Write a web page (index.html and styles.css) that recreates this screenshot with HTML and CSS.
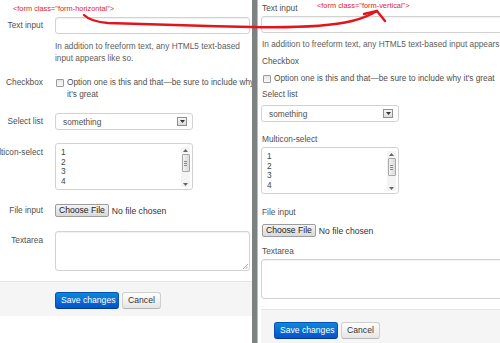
FILE: index.html
```html
<!DOCTYPE html>
<html>
<head>
<meta charset="utf-8">
<link rel="stylesheet" href="styles.css">
</head>
<body>
<div class="page">
  <section class="panel panel-h">
    <form class="form-h">
      <div class="row row-text">
        <label class="lbl">Text input</label>
        <div class="controls">
          <div class="input input-h"></div>
          <p class="help">In addition to freeform text, any HTML5 text-based<br>input appears like so.</p>
        </div>
      </div>
      <div class="row row-check">
        <label class="lbl">Checkbox</label>
        <div class="controls check">
          <span class="cb"></span>
          <span class="check-text">Option one is this and that—be sure to include why<br>it's great</span>
        </div>
      </div>
      <div class="row row-select">
        <label class="lbl">Select list</label>
        <div class="controls">
          <div class="select"><span>something</span><span class="dd"><svg width="5" height="3" viewBox="0 0 5 3"><path d="M0 0H5L2.5 3Z" fill="#333"/></svg></span></div>
        </div>
      </div>
      <div class="row row-multi">
        <label class="lbl lbl-top">Multicon-select</label>
        <div class="controls">
          <div class="multi">
            <div class="opts"><div>1</div><div>2</div><div>3</div><div>4</div></div>
            <div class="sb">
              <span class="sb-up"><svg width="5" height="3" viewBox="0 0 5 3"><path d="M0 3H5L2.5 0Z" fill="#666"/></svg></span>
              <span class="sb-thumb"><i></i><i></i><i></i></span>
              <span class="sb-down"><svg width="5" height="3" viewBox="0 0 5 3"><path d="M0 0H5L2.5 3Z" fill="#666"/></svg></span>
            </div>
          </div>
        </div>
      </div>
      <div class="row row-file">
        <label class="lbl">File input</label>
        <div class="controls file">
          <span class="choose">Choose File</span><span class="nofile">No file chosen</span>
        </div>
      </div>
      <div class="row row-ta">
        <label class="lbl lbl-top">Textarea</label>
        <div class="controls">
          <div class="textarea ta-h"><svg class="grip" width="6" height="6" viewBox="0 0 6 6"><path d="M1 6L6 1M3.5 6L6 3.5" stroke="#999" stroke-width="0.8"/></svg></div>
        </div>
      </div>
      <div class="actions actions-h">
        <span class="btn btn-primary">Save changes</span>
        <span class="btn btn-default">Cancel</span>
      </div>
    </form>
  </section>

  <div class="divider"></div>

  <section class="panel panel-v">
    <form class="form-v">
      <label class="vl vl-text">Text input</label>
      <div class="input input-v"></div>
      <p class="help help-v">In addition to freeform text, any HTML5 text-based input appears like so.</p>
      <label class="vl vl-check">Checkbox</label>
      <div class="check check-v">
        <span class="cb"></span>
        <span class="check-text">Option one is this and that—be sure to include why it's great</span>
      </div>
      <label class="vl vl-select">Select list</label>
      <div class="select"><span>something</span><span class="dd"><svg width="5" height="3" viewBox="0 0 5 3"><path d="M0 0H5L2.5 3Z" fill="#333"/></svg></span></div>
      <label class="vl vl-multi">Multicon-select</label>
      <div class="multi multi-v">
        <div class="opts"><div>1</div><div>2</div><div>3</div><div>4</div></div>
        <div class="sb">
          <span class="sb-up"><svg width="5" height="3" viewBox="0 0 5 3"><path d="M0 3H5L2.5 0Z" fill="#666"/></svg></span>
          <span class="sb-thumb"><i></i><i></i><i></i></span>
          <span class="sb-down"><svg width="5" height="3" viewBox="0 0 5 3"><path d="M0 0H5L2.5 3Z" fill="#666"/></svg></span>
        </div>
      </div>
      <label class="vl vl-file">File input</label>
      <div class="file file-v">
        <span class="choose">Choose File</span><span class="nofile">No file chosen</span>
      </div>
      <label class="vl vl-ta">Textarea</label>
      <div class="textarea ta-v"></div>
      <div class="actions actions-v">
        <span class="btn btn-primary">Save changes</span>
        <span class="btn btn-default">Cancel</span>
      </div>
    </form>
  </section>

  <span class="note note-h">&lt;form class="form-horizontal"&gt;</span>
  <span class="note note-v">&lt;form class="form-vertical"&gt;</span>
  <svg class="arrow" width="500" height="343" viewBox="0 0 500 343">
    <path d="M84 15 C88 19 94 22 108 23 C140 24 200 26 252 27 C300 28 335 25 352 21 C364 18 372 14 377 11" fill="none" stroke="#e4141c" stroke-width="2.4" stroke-linecap="round"/>
    <path d="M364 14 L377 11 L385 21" fill="none" stroke="#e4141c" stroke-width="2.4" stroke-linecap="round" stroke-linejoin="round"/>
  </svg>
</div>
</body>
</html>
```

FILE: styles.css
```css
* { box-sizing: border-box; }
html, body { margin: 0; padding: 0; background: #fff; }
body {
  font-family: "Liberation Sans", Arial, sans-serif;
  font-size: 8.3px;
  color: #4a4a4a;
}
.page {
  position: relative;
  width: 500px;
  height: 343px;
  display: flex;
  overflow: hidden;
}
.panel { height: 343px; overflow: hidden; }
.panel-h { width: 252px; flex: 0 0 252px; }
.divider { flex: 0 0 5px; width: 5px; background: #7c8181; border-right: 1px solid #b9bdbd; box-sizing: content-box; }
.panel-v { flex: 1 1 auto; padding-left: 2px; }

/* ---------- horizontal form ---------- */
.form-h { padding-top: 17px; display: flex; flex-direction: column; }
.row { display: flex; align-items: flex-start; }
.lbl {
  flex: 0 0 95px;
  margin-left: -40px;
  padding-right: 12px;
  text-align: right;
  white-space: nowrap;
  line-height: 17px;
  color: #4f4f4f;
}
.lbl-top { line-height: 12px; padding-top: 3px; }
.controls { flex: 1 1 auto; }
.row-check { margin-top: 12px; }
.row-check .lbl { line-height: 12px; }
.row-select { margin-top: 13px; }
.row-multi { margin-top: 13px; }
.row-file { margin-top: 14px; }
.row-file .lbl { line-height: 13px; }
.row-ta { margin-top: 14px; }

.input {
  height: 17px;
  border: 1px solid #d2d2d2;
  border-radius: 3px;
  background: #fff;
  box-shadow: inset 0 1px 1px rgba(0,0,0,0.06);
}
.input-h { width: 195px; }
.help {
  margin: 6px 0 0;
  line-height: 12px;
  color: #5e5e5e;
  white-space: nowrap;
}
.check { display: flex; align-items: flex-start; line-height: 12px; }
.cb {
  flex: 0 0 8px;
  width: 8px; height: 8px;
  margin: 3px 3px 0 1px;
  border: 1px solid #9a9a9a;
  border-radius: 1px;
  background: linear-gradient(#e6e6e6, #fafafa);
}
.check-text { white-space: nowrap; color: #4f4f4f; }

.select {
  width: 138px; height: 17px;
  border: 1px solid #d2d2d2;
  border-radius: 3px;
  background: #fff;
  display: flex; align-items: center; justify-content: space-between;
  padding: 0 5px 0 7px;
  color: #4f4f4f;
}
.dd {
  width: 10px; height: 9px;
  border: 1px solid #8f8f8f;
  background: linear-gradient(#f7f7f7, #dcdcdc);
  display: flex; align-items: center; justify-content: center;
}
.dd svg { display: block; }

.multi {
  width: 138px; height: 47px;
  border: 1px solid #d2d2d2;
  border-radius: 3px;
  background: #fff;
  display: flex;
  padding: 3px 2px 2px 5px;
}
.opts { flex: 1 1 auto; line-height: 9.6px; color: #444; padding-top: 1px; }
.sb {
  flex: 0 0 9px; width: 9px;
  display: flex; flex-direction: column; align-items: center; justify-content: space-between;
  background: #f4f4f4;
}
.sb-up, .sb-down { height: 6px; display: flex; align-items: center; justify-content: center; }
.sb-up svg, .sb-down svg { display: block; }
.sb-thumb {
  width: 8px; height: 18px;
  margin-top: -8px;
  border: 1px solid #a8a8a8;
  border-radius: 1px;
  background: linear-gradient(90deg, #f2f2f2, #dadada);
  display: flex; flex-direction: column; align-items: center; justify-content: center; gap: 1px;
}
.sb-thumb i { display: block; width: 3px; height: 1px; background: #888; }

.file { display: flex; align-items: center; }
.choose {
  height: 13px;
  padding: 0 3px;
  line-height: 11px;
  font-size: 8.6px;
  border: 1px solid #9c9c9c;
  border-radius: 2px;
  background: linear-gradient(#f4f4f4, #d9d9d9);
  color: #222;
  white-space: nowrap;
}
.nofile { margin-left: 3px; color: #333; white-space: nowrap; font-size: 8.6px; }

.textarea {
  position: relative;
  height: 40px;
  border: 1px solid #d2d2d2;
  border-radius: 3px;
  background: #fff;
  box-shadow: inset 0 1px 1px rgba(0,0,0,0.06);
}
.ta-h { width: 195px; }
.grip { position: absolute; right: 1px; bottom: 1px; }

.actions {
  background: #f5f5f5;
  border-top: 1px solid #e6e6e6;
  display: flex; gap: 3px;
}
.actions-h { margin-top: 10px; padding: 10px 0 7px 55px; }

.btn {
  height: 17px;
  line-height: 15px;
  padding: 0 5px;
  border-radius: 3px;
  border: 1px solid;
  white-space: nowrap;
  display: inline-block;
  font-size: 8.6px;
}
.btn-primary {
  width: 64px;
  text-align: center;
  color: #fff;
  background: linear-gradient(#0a89d8, #0752cc);
  border-color: #0650b8 #0650b8 #03399a;
}
.btn-default {
  width: 39px;
  text-align: center;
  color: #333;
  background: linear-gradient(#ffffff, #e5e5e5);
  border-color: #d0d0d0 #d0d0d0 #b5b5b5;
}

/* ---------- vertical form ---------- */
.form-v { padding-top: 2px; padding-left: 1px; display: flex; flex-direction: column; align-items: flex-start; }
.vl { line-height: 12px; color: #4f4f4f; white-space: nowrap; margin-left: 1px; }
.input-v { width: 270px; margin-top: 2px; }
.help-v { margin-top: 5px; margin-left: 1px; }
.vl-check { margin-top: 5px; }
.check-v { margin-top: 5px; }
.check-v .cb { margin-left: 2px; }
.vl-select { margin-top: 4px; }
.form-v .select { margin-top: 5px; }
.vl-multi { margin-top: 11px; }
.multi-v { margin-top: 2px; }
.vl-file { margin-top: 12px; }
.file-v { margin-top: 6px; margin-left: 1px; }
.vl-ta { margin-top: 8px; }
.ta-v { width: 270px; margin-top: 2px; }
.actions-v { margin-top: 10px; width: 260px; padding: 12px 0 10px 13px; }

/* ---------- annotations ---------- */
.note {
  position: absolute;
  font-family: "Liberation Sans", Arial, sans-serif;
  font-size: 7.4px;
  color: #e0222a;
  white-space: nowrap;
  line-height: 9px;
}
.note-h { left: 13px; top: 4px; }
.note-v { left: 317px; top: 1px; }
.arrow { position: absolute; left: 0; top: 0; pointer-events: none; }
```
